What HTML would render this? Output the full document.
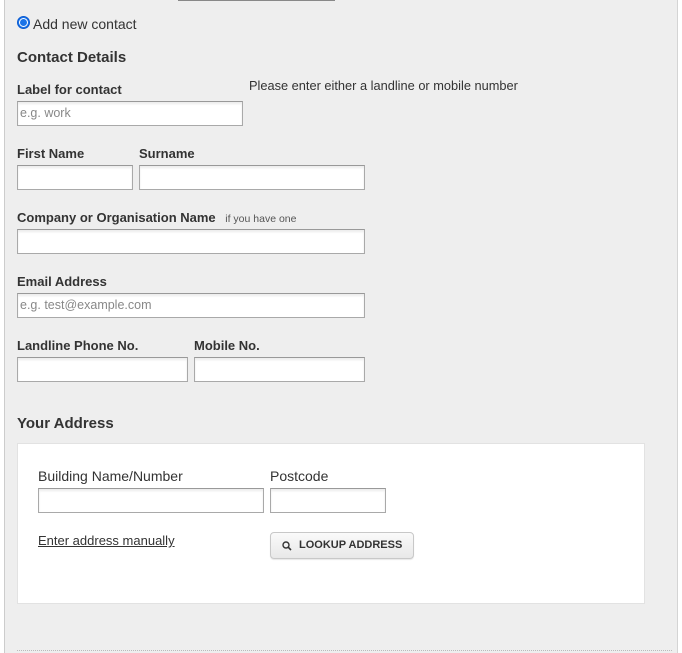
<!DOCTYPE html>
<html><head><meta charset="utf-8"><style>
body{margin:0;width:682px;height:653px;background:#fff;position:relative;overflow:hidden;font-family:"Liberation Sans",Arial,sans-serif;color:#333}
.a{position:absolute;white-space:nowrap}
#bg{position:absolute;left:4px;top:0;width:672px;height:653px;background:#eee;border-left:1px solid #ccc;border-right:1px solid #d4d4d4}
.l{font-size:13px;font-weight:bold;color:#333}
.h{font-size:15px;font-weight:bold;color:#333}
.i{position:absolute;box-sizing:border-box;height:25px;background:#fff;border:1px solid #a9a9a9;border-top-color:#999;box-shadow:inset 0 2px 2px rgba(0,0,0,.08);font-size:12.5px;color:#888;padding:4px 2px}
.n{font-size:14px;color:#333}
</style></head><body>
<div id="bg"></div>
<div class="a" style="left:178px;top:0;width:157px;height:1px;background:#888"></div>
<div class="a" style="left:17px;top:16px;width:13px;height:13px;border-radius:50%;background:#1a73e8;box-sizing:border-box;border:1px solid #0b5ad0"><div style="position:absolute;left:1px;top:1px;width:7px;height:7px;border-radius:50%;border:1px solid #fff;background:#1a73e8"></div></div>
<div class="a" style="left:33px;top:16px;font-size:14px;color:#333">Add new contact</div>
<div class="a h" style="left:17px;top:49px">Contact Details</div>
<div class="a l" style="left:17px;top:82px">Label for contact</div>
<div class="a" style="left:249px;top:78px;font-size:12.8px;color:#333">Please enter either a landline or mobile number</div>
<div class="i" style="left:17px;top:101px;width:226px">e.g. work</div>
<div class="a l" style="left:17px;top:146px">First Name</div>
<div class="a l" style="left:139px;top:146px">Surname</div>
<div class="i" style="left:17px;top:165px;width:116px"></div>
<div class="i" style="left:139px;top:165px;width:226px"></div>
<div class="a l" style="left:17px;top:210px">Company or Organisation Name <span style="font-weight:normal;font-size:10.5px;color:#555;margin-left:6px">if you have one</span></div>
<div class="i" style="left:17px;top:229px;width:348px"></div>
<div class="a l" style="left:17px;top:274px">Email Address</div>
<div class="i" style="left:17px;top:293px;width:348px">e.g. test@example.com</div>
<div class="a l" style="left:17px;top:338px">Landline Phone No.</div>
<div class="a l" style="left:194px;top:338px">Mobile No.</div>
<div class="i" style="left:17px;top:357px;width:171px"></div>
<div class="i" style="left:194px;top:357px;width:171px"></div>
<div class="a h" style="left:17px;top:415px">Your Address</div>
<div class="a" style="left:17px;top:443px;width:626px;height:159px;background:#fff;border:1px solid #e2e2e2"></div>
<div class="a n" style="left:38px;top:468px">Building Name/Number</div>
<div class="a n" style="left:270px;top:468px">Postcode</div>
<div class="i" style="left:38px;top:488px;width:226px"></div>
<div class="i" style="left:270px;top:488px;width:116px"></div>
<div class="a n" style="left:38px;top:533px;font-size:13px;text-decoration:underline">Enter address manually</div>
<div class="a" style="left:270px;top:532px;width:144px;height:27px;box-sizing:border-box;border:1px solid #c8c8c8;border-radius:4px;background:linear-gradient(#fafafa,#e8e8e8);box-shadow:0 1px 1px rgba(0,0,0,.1)">
<svg style="position:absolute;left:11px;top:8px" width="10" height="10" viewBox="0 0 10 10"><circle cx="4" cy="4" r="3" fill="none" stroke="#333" stroke-width="1.4"/><path d="M6.2 6.2L9 9" stroke="#333" stroke-width="1.6"/></svg>
<div class="a n" style="left:28px;top:6px;font-size:11px;font-weight:bold">LOOKUP ADDRESS</div></div>
<div class="a" style="left:17px;top:650px;width:655px;border-top:1px dotted #bbb"></div>
</body></html>
